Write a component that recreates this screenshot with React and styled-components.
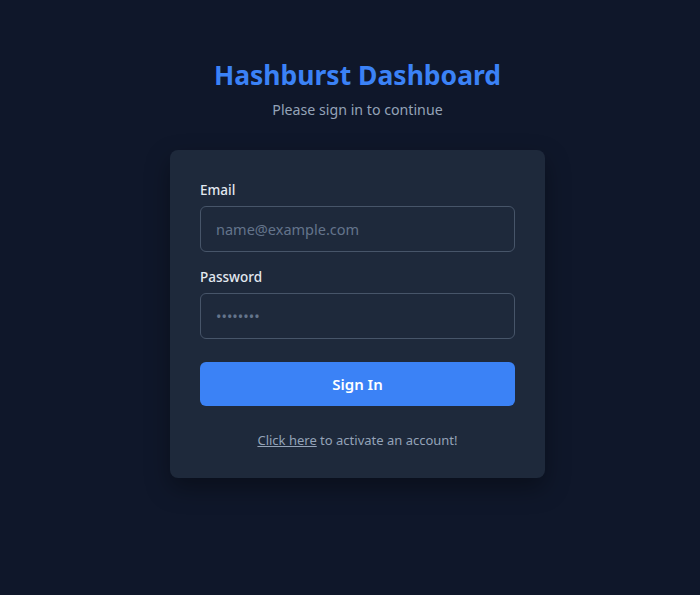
import React from "react";
import styled, { createGlobalStyle } from "styled-components";

const Global = createGlobalStyle`
  html, body {
    margin: 0;
    padding: 0;
    background: #0f172a;
  }
  body {
    font-family: "Noto Sans", "Open Sans", sans-serif;
    color: #e2e8f0;
  }
`;

export default function App() {
  return (
    <>
      <Global />
      <Page>
        <Header>
          <h1>Hashburst Dashboard</h1>
          <p>Please sign in to continue</p>
        </Header>
        <Card>
          <form onSubmit={e => e.preventDefault()}>
            <Label htmlFor="email">Email</Label>
            <Input id="email" type="text" placeholder="name@example.com" />
            <Label htmlFor="password" $top={15}>
              Password
            </Label>
            <Input id="password" type="password" placeholder="••••••••" />
            <Button type="submit">Sign In</Button>
          </form>
          <Footer>
            <a href="#activate">Click here</a> to activate an account!
          </Footer>
        </Card>
      </Page>
    </>
  );
}

const Page = styled.div`
  min-height: 595px;
  display: flex;
  flex-direction: column;
  align-items: center;
  padding: 57px 0 0 15px;
  box-sizing: border-box;
`;

const Header = styled.div`
  text-align: center;
  margin-bottom: 28px;
  h1 {
    margin: 0;
    font-size: 26.5px;
    line-height: 36px;
    font-weight: 700;
    color: #3b82f6;
  }
  p {
    margin: 5px 0 0;
    font-size: 14.2px;
    line-height: 24px;
    color: #94a3b8;
  }
`;

const Card = styled.div`
  width: 375px;
  box-sizing: border-box;
  background: #1e293b;
  border-radius: 8px;
  padding: 30px 30px 28px;
  box-shadow: 0 10px 25px rgba(0, 0, 0, 0.35);
  form {
    display: flex;
    flex-direction: column;
  }
`;

const Label = styled.label`
  display: block;
  font-size: 13.5px;
  line-height: 20px;
  font-weight: 500;
  color: #e2e8f0;
  margin: ${p => p.$top || 0}px 0 6px;
`;

const Input = styled.input`
  height: 46px;
  box-sizing: border-box;
  width: 100%;
  background: #1e293b;
  border: 1px solid #475569;
  border-radius: 6px;
  padding: 0 15px;
  font-family: inherit;
  font-size: 14.5px;
  color: #e2e8f0;
  outline: none;
  &::placeholder {
    color: #64748b;
  }
`;

const Button = styled.button`
  margin-top: 23px;
  height: 44px;
  border: none;
  border-radius: 6px;
  background: #3b82f6;
  color: #fff;
  font-family: inherit;
  font-size: 15px;
  font-weight: 600;
  cursor: pointer;
`;

const Footer = styled.p`
  margin: 24px 0 0;
  text-align: center;
  font-size: 13px;
  line-height: 20px;
  color: #94a3b8;
  a {
    color: #94a3b8;
    text-decoration: underline;
  }
`;
